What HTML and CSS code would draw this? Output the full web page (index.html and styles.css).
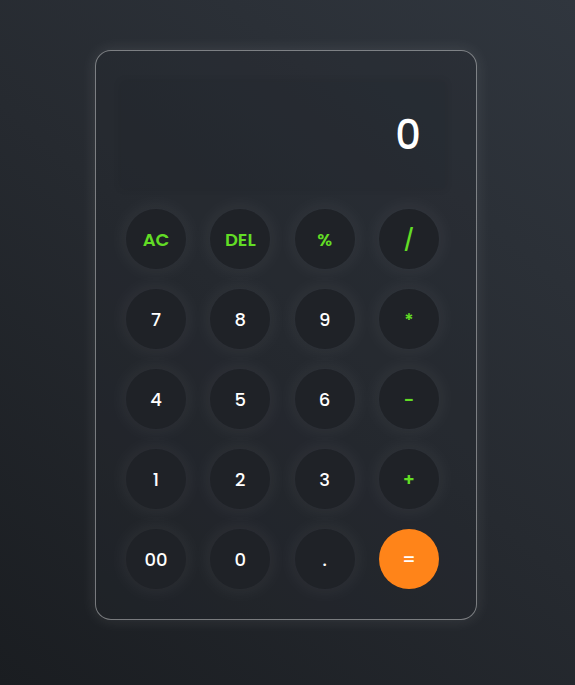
FILE: index.html
```html
<!DOCTYPE html>
<html lang="en">
<head>
    <meta charset="UTF-8">
    <meta name="viewport" content="width=device-width, initial-scale=1.0">
    <title>Calculator</title>
    <link rel="stylesheet" href="styles.css">
</head>
<body>
    <div class="calculator">
        <div class="display">
            <span id="output">0</span>
        </div>
        <div class="keys">
            <button class="key op">AC</button>
            <button class="key op">DEL</button>
            <button class="key op">%</button>
            <button class="key op big">/</button>

            <button class="key">7</button>
            <button class="key">8</button>
            <button class="key">9</button>
            <button class="key op">*</button>

            <button class="key">4</button>
            <button class="key">5</button>
            <button class="key">6</button>
            <button class="key op">-</button>

            <button class="key">1</button>
            <button class="key">2</button>
            <button class="key">3</button>
            <button class="key op">+</button>

            <button class="key">00</button>
            <button class="key">0</button>
            <button class="key">.</button>
            <button class="key equal">=</button>
        </div>
    </div>
</body>
</html>
```

FILE: styles.css
```css
* {
    margin: 0;
    padding: 0;
    box-sizing: border-box;
}

body {
    min-height: 100vh;
    background: linear-gradient(40deg, #1a1d21 0%, #262a30 50%, #30363e 100%);
    font-family: 'Poppins', 'Open Sans', sans-serif;
    padding-top: 50px;
    padding-left: 95px;
}

.calculator {
    width: 382px;
    height: 570px;
    border: 1px solid rgba(255, 255, 255, 0.4);
    border-radius: 16px;
    background: rgba(35, 39, 45, 0.3);
    box-shadow: 0 0 16px rgba(255, 255, 255, 0.1);
    padding: 31px 30px 29px 25px;
}

.display {
    width: 324px;
    height: 106px;
    display: flex;
    justify-content: flex-end;
    align-items: center;
    padding-right: 24px;
    background: rgba(30, 33, 39, 0.15);
    box-shadow: 0 0 8px rgba(0, 0, 0, 0.1);
    color: #fff;
    font-size: 40px;
    font-weight: 500;
}

.keys {
    margin-top: 21px;
    padding-left: 5px;
    display: grid;
    grid-template-columns: repeat(4, 60px);
    grid-auto-rows: 60px;
    column-gap: 24.3px;
    row-gap: 20px;
}

.key {
    width: 60px;
    height: 60px;
    border: none;
    border-radius: 50%;
    background: #1f2227;
    color: #fff;
    font-family: inherit;
    font-size: 18px;
    font-weight: 500;
    cursor: pointer;
    box-shadow: 0 0 22px rgba(255, 255, 255, 0.08);
}

.key.op {
    color: #62dd25;
    font-size: 18px;
    font-weight: 600;
}

.key.big {
    font-size: 22px;
    font-weight: 500;
}

.key.equal {
    background: #ff8419;
    color: #fff;
    box-shadow: none;
}
```
